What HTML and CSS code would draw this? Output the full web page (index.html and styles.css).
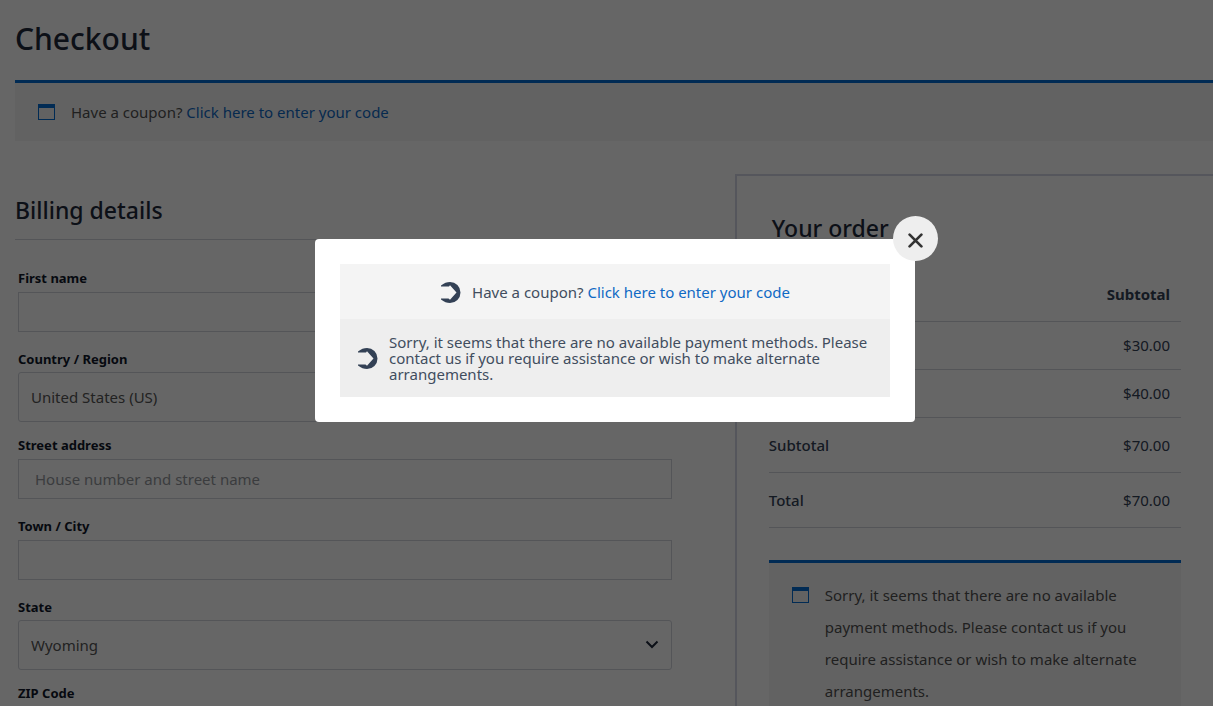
FILE: index.html
```html
<!DOCTYPE html>
<html lang="en">
<head>
    <meta charset="UTF-8">
    <meta name="viewport" content="width=device-width, initial-scale=1.0">
    <title>Checkout</title>
    <link rel="stylesheet" href="styles.css">
</head>
<body>
    <main class="page">
        <h1>Checkout</h1>

        <div class="notice">
            <svg class="notice-icon" viewBox="0 0 17 16" aria-hidden="true">
                <path d="M0 0h17v16H0zM1 4v11h15V4z" fill-rule="evenodd"/>
            </svg>
            <p>Have a coupon? <a href="#coupon">Click here to enter your code</a></p>
        </div>

        <div class="checkout">
            <form class="billing">
                <h2>Billing details</h2>
                <div class="fields">
                    <div class="field">
                        <label for="first-name">First name</label>
                        <input type="text" id="first-name">
                    </div>
                    <div class="field field-select">
                        <label for="country">Country / Region</label>
                        <select id="country">
                            <option>United States (US)</option>
                        </select>
                    </div>
                    <div class="field">
                        <label for="street">Street address</label>
                        <input type="text" id="street" placeholder="House number and street name">
                    </div>
                    <div class="field">
                        <label for="city">Town / City</label>
                        <input type="text" id="city">
                    </div>
                    <div class="field field-select">
                        <label for="state">State</label>
                        <div class="select-wrap">
                            <select id="state">
                                <option>Wyoming</option>
                            </select>
                            <svg class="chevron" viewBox="0 0 14 9" aria-hidden="true">
                                <path d="M1.5 1.5 7 7l5.5-5.5"/>
                            </svg>
                        </div>
                    </div>
                    <div class="field">
                        <label for="zip">ZIP Code</label>
                        <input type="text" id="zip">
                    </div>
                </div>
            </form>

            <section class="order">
                <h2>Your order</h2>
                <table>
                    <thead>
                        <tr><td></td><th class="amount">Subtotal</th></tr>
                    </thead>
                    <tbody>
                        <tr><td></td><td class="amount">$30.00</td></tr>
                        <tr><td></td><td class="amount">$40.00</td></tr>
                    </tbody>
                    <tfoot>
                        <tr><th>Subtotal</th><td class="amount">$70.00</td></tr>
                        <tr><th>Total</th><td class="amount">$70.00</td></tr>
                    </tfoot>
                </table>
                <div class="notice">
                    <svg class="notice-icon" viewBox="0 0 17 16" aria-hidden="true">
                        <path d="M0 0h17v16H0zM1 4v11h15V4z" fill-rule="evenodd"/>
                    </svg>
                    <p>Sorry, it seems that there are no available payment methods. Please contact us if you require assistance or wish to make alternate arrangements.</p>
                </div>
            </section>
        </div>
    </main>

    <div class="overlay">
        <div class="modal" role="dialog" aria-modal="true" aria-label="Messages">
            <button class="modal-close" type="button" aria-label="Close">
                <svg viewBox="0 0 14 14" aria-hidden="true">
                    <path d="M1.5 1.5l11 11M12.5 1.5l-11 11"/>
                </svg>
            </button>
            <ul class="messages">
                <li>
                    <svg class="message-icon" viewBox="0 0 21 22" aria-hidden="true">
                        <path d="M1 4.5C4 2 7 1 10 1a10.500 10.500 0 0 1 0 21c-3 0-6-1-9-3.5v-1h7.500l1.500 1.300 6.500-7.300L10 4.200 9 5.500H1z"/>
                    </svg>
                    <p>Have a coupon? <a href="#coupon">Click here to enter your code</a></p>
                </li>
                <li>
                    <svg class="message-icon" viewBox="0 0 21 22" aria-hidden="true">
                        <path d="M1 4.5C4 2 7 1 10 1a10.500 10.500 0 0 1 0 21c-3 0-6-1-9-3.5v-1h7.500l1.500 1.300 6.500-7.300L10 4.200 9 5.500H1z"/>
                    </svg>
                    <p>Sorry, it seems that there are no available payment methods. Please contact us if you require assistance or wish to make alternate arrangements.</p>
                </li>
            </ul>
        </div>
    </div>
</body>
</html>
```
FILE: styles.css
```css
:root {
    --link-color: #046bd2;
    --heading-color: #1e293b;
    --text-color: #334155;
    --border-color: #d1d5db;
}

* {
    margin: 0;
    padding: 0;
    box-sizing: border-box;
}

body {
    height: 100vh;
    overflow: hidden;
    font-family: "Noto Sans", sans-serif;
    font-size: 15px;
    line-height: 32px;
    background-color: #fff;
    color: var(--text-color);
}

a {
    color: #0f69c4;
    text-decoration: none;
}

h1, h2 {
    color: var(--heading-color);
    font-weight: 500;
}

.page {
    height: 100vh;
    overflow: hidden;
    padding: 18px 0 0 15px;
}

h1 {
    font-size: 30px;
    line-height: 42px;
    margin-bottom: 20px;
}

h2 {
    font-size: 23px;
    line-height: 32px;
}

.notice {
    display: flex;
    align-items: flex-start;
    gap: 16px;
    padding: 13px 23px;
    border-top: 3px solid var(--link-color);
    background-color: #f6f6f6;
    color: #515151;
}

.notice-icon {
    flex: none;
    width: 17px;
    height: 16px;
    margin-top: 8px;
    fill: var(--link-color);
}

.checkout {
    display: flex;
    align-items: flex-start;
    justify-content: space-between;
    margin-top: 33px;
}

.billing {
    width: 55%;
    padding-top: 20px;
}

.billing h2 {
    padding-bottom: 13px;
    border-bottom: 1px solid var(--border-color);
}

.fields {
    padding: 28px 2px 0 3px;
}

.field {
    display: flex;
    flex-direction: column;
    gap: 4px;
    margin-bottom: 17px;
}

.field-select {
    gap: 3px;
    margin-bottom: 13px;
}

label {
    font-size: 13px;
    font-weight: 700;
    line-height: 20px;
    color: #0f172a;
}

input, select {
    width: 100%;
    height: 40px;
    padding: 0 16px;
    border: 1px solid var(--border-color);
    background-color: #fff;
    color: #555;
    font-family: inherit;
    font-size: 15px;
}

input::placeholder {
    color: #94979c;
}

select {
    height: 50px;
    padding: 0 12px;
    border-radius: 3px;
    appearance: none;
}

.select-wrap {
    position: relative;
    display: flex;
}

.chevron {
    position: absolute;
    top: 20px;
    right: 13px;
    width: 14px;
    height: 9px;
    fill: none;
    stroke: #1e293b;
    stroke-width: 2;
    pointer-events: none;
}

.order {
    width: calc(40% - 1px);
    padding: 36px 32px;
    border: 2px solid #d5d6e6;
    border-right: none;
}

.order h2 {
    padding-left: 3px;
    margin-bottom: 24px;
}

table {
    width: 100%;
    margin-bottom: 32px;
    border-collapse: collapse;
}

th, td {
    height: 48px;
    border-bottom: 1px solid var(--border-color);
    line-height: 24px;
    text-align: left;
}

tfoot th, tfoot td {
    height: 55px;
}

th {
    font-weight: 500;
}

thead th, thead td {
    height: 53px;
}

thead th {
    font-weight: 700;
}

.amount {
    padding-right: 11px;
    text-align: right;
}

.order .notice {
    padding-top: 16px;
}

.overlay {
    position: fixed;
    inset: 0;
    display: flex;
    align-items: flex-start;
    justify-content: center;
    padding: 239px 0 0 17px;
    background-color: rgba(0, 0, 0, 0.6);
}

.modal {
    position: relative;
    width: 600px;
    padding: 25px;
    border-radius: 4px;
    background-color: #fff;
}

.modal-close {
    position: absolute;
    top: -23px;
    right: -23px;
    display: flex;
    align-items: center;
    justify-content: center;
    width: 45px;
    height: 45px;
    padding-top: 3px;
    border: none;
    border-radius: 50%;
    background-color: #eee;
    cursor: pointer;
}

.modal-close svg {
    width: 15px;
    height: 15px;
    stroke: #333;
    stroke-width: 2.5;
    stroke-linecap: round;
}

.messages {
    list-style: none;
    line-height: 16px;
    color: #414d5e;
}

.messages li {
    display: flex;
    align-items: center;
    justify-content: center;
    gap: 11px;
    padding: 15px 17px;
    background-color: #eee;
}

.messages li:first-child {
    padding: 17px 17px 16px;
    background-color: #f4f4f4;
}

.message-icon {
    flex: none;
    width: 21px;
    height: 22px;
    fill: #334155;
}
```
